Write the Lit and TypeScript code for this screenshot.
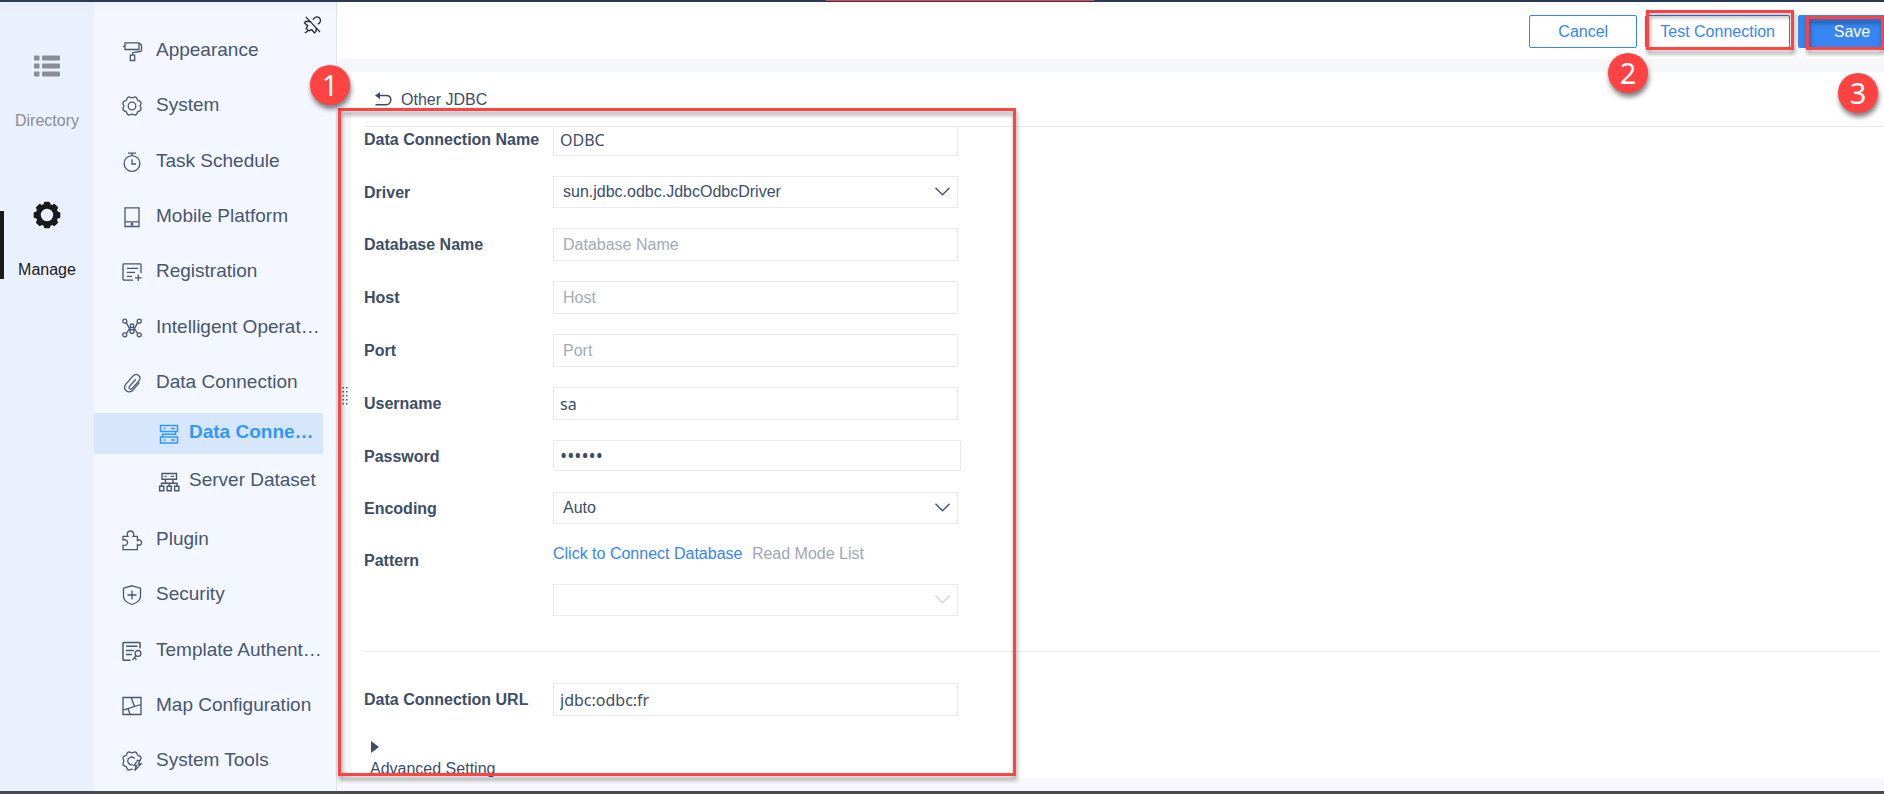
import { LitElement, html, svg, css, nothing } from "lit";
import type { SVGTemplateResult } from "lit";
import { customElement, property } from "lit/decorators.js";
import { classMap } from "lit/directives/class-map.js";

/** Outline of a soft-toothed wheel centred at 10,10. */
function wheel(teeth: number, radius: number, depth: number, from = 0, to = 360): string {
  const points: string[] = [];
  for (let a = from; a <= to; a += 5) {
    const t = (a * Math.PI) / 180;
    const r = radius + depth * Math.cos(teeth * t);
    points.push(`${(10 + r * Math.sin(t)).toFixed(2)} ${(10 - r * Math.cos(t)).toFixed(2)}`);
  }
  return "M" + points.join("L") + (to - from === 360 ? "Z" : "");
}

const icons: Record<string, SVGTemplateResult> = {
  appearance: svg`<path d="M1 5.400h2V1.800h14v6.700H3V5.400M17 3h.8c1.200 0 1.700.8 1.700 2v4c0 1-.4 1.400-1.400 1.500l-6.200.8c-1 .1-1.400.5-1.400 1.400v1.300M8.300 14.200h4.400v5.300H8.300z"/>`,
  system: svg`<path d=${wheel(8, 8.9, -0.7)}/><circle cx="10" cy="10" r="3.800"/>`,
  schedule: svg`<circle cx="10" cy="11.500" r="7.900"/><path d="M6 1.200h8M10 1.200v2.400M10 7.200v4.800h4"/>`,
  mobile: svg`<path d="M3 .8h14v18.700H3zM3 14.800h14"/><circle cx="10" cy="17.200" r=".8" fill="currentColor"/>`,
  registration: svg`<path d="M19 11V2.700c0-.6-.3-.9-.9-.9H1.900c-.6 0-.9.3-.9.9v14.600c0 .6.3.9.9.9H11M5 6.300h11M5 10.300h8M5 14.300h5M16.300 12.500v6.500M13 15.800h6.500"/>`,
  intelligent: svg`<circle cx="2.800" cy="3.200" r="2"/><circle cx="17.200" cy="3.200" r="2"/><circle cx="2.800" cy="16.800" r="2"/><circle cx="17.200" cy="16.800" r="2"/><circle cx="10" cy="7.800" r="1.800"/><circle cx="10" cy="13.500" r="2"/><path d="M4.300 4.600l4.300 8M15.700 4.600l-4.300 8M4.300 15.400l4.400-6.300M15.700 15.400l-4.400-6.300"/>`,
  clip: svg`<path d="M13.800 6.300l-6.100 6.800c-.9 1-.8 2 0 2.700.8.6 1.800.5 2.600-.4l6.400-7.300c1.700-2 1.500-4.300-.1-5.700-1.700-1.400-4-1.300-5.700.7l-7 8c-1.800 2.200-1.500 4.900.3 6.600 1.900 1.700 4.800 1.600 6.700-.6l6.500-7.500"/>`,
  connection: svg`<path d="M1.500 1.500h17v6h-17zM1.500 13h17v6h-17zM3.500 13v-2.700h13V7.500M4.500 4.500h2M12 4.500h4M4.500 16h2M12 16h4" stroke-width="1.500"/>`,
  dataset: svg`<path d="M3 1.500h14.500v5.800H3zM5.500 4.400h2M12 4.400h3M6.500 7.300v4M14 7.300v4M10.200 11.300v3M2.500 14.300v-3h15.500v3M.6 14.300h4.200v4.500H.6zM8.100 14.300h4.200v4.500H8.100zM15.600 14.300h4.200v4.500h-4.200z" stroke-width="1.400"/>`,
  plugin: svg`<path d="M1 6.300h4.900c-.8-1.100-.9-2-.6-2.900.5-1.600 1.600-2.400 3.200-2.400s2.700.8 3.200 2.400c.3.900.2 1.800-.6 2.900h4.300v4.300c1.100-.7 1.900-.7 2.700-.4 1 .5 1.500 1.300 1.500 2.400s-.5 2-1.500 2.500c-.8.300-1.600.2-2.700-.5v5H1v-4.300c2 .4 4.600-.3 4.600-2.800S3 9.300 1 10z"/>`,
  security: svg`<path d="M10 .8l8.500 2.400v8c0 3.800-3.400 6.500-8.500 8.300-5.100-1.800-8.500-4.500-8.500-8.300v-8zM10 5.500v9M5.500 10h9"/>`,
  template: svg`<path d="M18 7.500V2.300c0-.6-.3-.9-.9-.9H1.900c-.6 0-.9.3-.9.9v16c0 .6.3.9.9.9H8.500M4 5.300h11.500M4 9.400h8M4 13.500h6" stroke-width="1.500"/><circle cx="16" cy="12.400" r="2.900"/><path d="M14 14.500l-3.500 4.700M12.500 16.800l2 2"/>`,
  map: svg`<path d="M1 1.500h18v17H1zM1 14.200l18-5.700M9.200 1.500l3.300 9M6 12.700l2.200 5.800"/>`,
  tools: svg`<path d=${wheel(8, 8.9, -0.7, -185, 85)}/><path d="M12.600 7.500a3.800 3.800 0 1 0-1.600 6M15.500 9.500l-3.500 5h2.500l-1.800 5 6.300-6.500h-2.700l1.700-3.500z"/>`,
  pin: svg`<path d="M3 2l15 16M10.500 5c1.500-3.200 4.800-3.800 6.800-1.800s1.300 5-1.800 6.500M8.500 7l-5.600-.4-1.400 1.700 3.500 3-1.700 2.700 2.700 2.700M5.500 16.500l-3.500 2.500M14 13l-.3 4.300-1.700 1.500-3-3.500M9 15.300l-3 1.400" stroke-width="1.400"/>`,
};

interface MenuEntry {
  icon: string;
  text: string;
  active?: boolean;
  children?: MenuEntry[];
}

const menu: MenuEntry[] = [
  { icon: "appearance", text: "Appearance" },
  { icon: "system", text: "System" },
  { icon: "schedule", text: "Task Schedule" },
  { icon: "mobile", text: "Mobile Platform" },
  { icon: "registration", text: "Registration" },
  { icon: "intelligent", text: "Intelligent Operations" },
  {
    icon: "clip",
    text: "Data Connection",
    children: [
      { icon: "connection", text: "Data Connection", active: true },
      { icon: "dataset", text: "Server Dataset" },
    ],
  },
  { icon: "plugin", text: "Plugin" },
  { icon: "security", text: "Security" },
  { icon: "template", text: "Template Authentication" },
  { icon: "map", text: "Map Configuration" },
  { icon: "tools", text: "System Tools" },
];

@customElement("line-icon")
class LineIcon extends LitElement {
  @property() name = "";

  static styles = css`
    :host {
      display: block;
      flex: none;
      width: 20px;
      height: 20px;
    }
    svg {
      display: block;
      width: 100%;
      height: 100%;
      fill: none;
      stroke: currentColor;
      stroke-width: 1.3;
      overflow: visible;
    }
  `;

  render() {
    return html`<svg viewBox="0 0 20 20" aria-hidden="true">${icons[this.name]}</svg>`;
  }
}

@customElement("nav-rail")
class NavRail extends LitElement {
  static styles = css`
    :host {
      display: flex;
      flex-direction: column;
      flex: none;
      gap: 71px;
      width: 94px;
      padding-top: 52px;
      box-sizing: border-box;
      background: #eaf1fd;
    }
    .item {
      position: relative;
      display: flex;
      flex-direction: column;
      align-items: center;
      gap: 32px;
      line-height: 22px;
      color: #8a8d93;
      text-decoration: none;
    }
    .item.active {
      color: #1a1a1a;
    }
    .item.active::before {
      content: "";
      position: absolute;
      left: 0;
      bottom: 2px;
      width: 4px;
      height: 68px;
      background: #1a1a1a;
    }
    svg {
      display: block;
      width: 26px;
      height: 24px;
      overflow: visible;
    }
  `;

  render() {
    const spokes = [0, 45, 90, 135, 180, 225, 270, 315];
    return html`
      <a class="item" href="#directory">
        <svg viewBox="0 0 26 24" fill="currentColor" aria-hidden="true">
          ${[1.5, 9.5, 17.5].map(
            (y) => svg`<rect x="0" y=${y} width="5.500" height="5" rx="1"/><rect x="8" y=${y} width="18" height="5" rx="1"/>`
          )}
        </svg>
        <span>Directory</span>
      </a>
      <a class="item active" href="#manage" aria-current="page">
        <svg viewBox="0 0 26 24" aria-hidden="true">
          <circle cx="13" cy="12" r="8.700" fill="none" stroke="currentColor" stroke-width="5"/>
          ${spokes.map(
            (a) => svg`<rect x="9.800" y="-1.300" width="6.400" height="5" rx="1.500" fill="currentColor" transform="rotate(${a} 13 12)"/>`
          )}
        </svg>
        <span>Manage</span>
      </a>
    `;
  }
}

@customElement("side-menu")
class SideMenu extends LitElement {
  static styles = css`
    :host {
      position: relative;
      flex: none;
      width: 243px;
      box-sizing: border-box;
      border-right: 1px solid #dfe4ee;
      background: #f4f7ff;
    }
    .pin {
      position: absolute;
      top: 13px;
      right: 14px;
      padding: 0;
      border: 0;
      background: none;
      color: #26282c;
    }
    .pin line-icon {
      width: 19px;
      height: 19px;
    }
    ul {
      margin: 0;
      padding: 0;
      list-style: none;
    }
    .menu {
      display: flex;
      flex-direction: column;
      height: 100%;
      padding: 20px 0 3px;
      box-sizing: border-box;
    }
    .entry {
      display: flex;
      flex: 1 0 32px;
    }
    .branch {
      padding: 3px 13px 9px 0;
    }
    .link {
      display: flex;
      align-items: center;
      flex: 1;
      min-width: 0;
      gap: 14px;
      padding: 0 13px 0 28px;
      font-size: 19px;
      color: #48566f;
      text-decoration: none;
    }
    .link line-icon {
      margin-top: 2px;
    }
    .text {
      min-width: 0;
      overflow: hidden;
      text-overflow: ellipsis;
      white-space: nowrap;
      line-height: 24px;
    }
    .child {
      height: 41px;
      gap: 10px;
      padding: 0 6px 0 65px;
    }
    .branch li + li {
      margin-top: 7px;
    }
    .child .text {
      padding-bottom: 2px;
    }
    .child.active {
      background: #d6e7fd;
      color: #3296fa;
      font-weight: bold;
    }
  `;

  private link(entry: MenuEntry, child = false) {
    return html`<a
      class=${classMap({ link: true, child, active: !!entry.active })}
      href="#${entry.icon}"
      aria-current=${entry.active ? "page" : nothing}
      ><line-icon name=${entry.icon}></line-icon><span class="text">${entry.text}</span></a
    >`;
  }

  render() {
    return html`
      <ul class="menu">
        ${menu.map(
          (entry) => html`
            <li class="entry">${this.link(entry)}</li>
            ${entry.children
              ? html`<li class="branch">
                  <ul>
                    ${entry.children.map((child) => html`<li>${this.link(child, true)}</li>`)}
                  </ul>
                </li>`
              : nothing}
          `
        )}
      </ul>
      <button class="pin" type="button" aria-label="Unpin menu"><line-icon name="pin"></line-icon></button>
    `;
  }
}

@customElement("connection-form")
class ConnectionForm extends LitElement {
  static styles = css`
    :host {
      display: block;
      min-height: 0;
      overflow: hidden;
      color: #3d4d66;
    }
    form {
      display: flex;
      flex-direction: column;
      gap: 20px;
      /* the list rests slightly scrolled under the panel title */
      margin-top: -4px;
    }
    .row {
      display: grid;
      grid-template-columns: 189px minmax(0, 405px);
      align-items: start;
    }
    .label {
      height: 32px;
      font-weight: bold;
      line-height: 34px;
      white-space: nowrap;
    }
    input,
    select {
      display: block;
      width: 100%;
      height: 32px;
      margin: 0;
      padding: 0 9px;
      box-sizing: border-box;
      border: 1px solid #e8eaed;
      border-radius: 0;
      outline: none;
      background: #fff;
      color: #3d4d66;
      font: 16px "Liberation Sans", Arial, sans-serif;
    }
    input {
      height: 33px;
    }
    input::placeholder {
      color: #a3aab6;
      opacity: 1;
    }
    .filled {
      padding: 0 6px;
      font-family: "Noto Sans", sans-serif;
    }
    .secret {
      width: calc(100% + 3px);
      height: 31px;
      border-radius: 2px;
      font-size: 19px;
    }
    .pick {
      position: relative;
    }
    select {
      padding-bottom: 2px;
      appearance: none;
      opacity: 1;
    }
    .pick svg {
      position: absolute;
      right: 8px;
      top: 11px;
      width: 15px;
      height: 9px;
      fill: none;
      stroke: #48566f;
      stroke-width: 1.5;
      pointer-events: none;
    }
    .pick.off svg {
      stroke: #d3d6dd;
    }
    .stack {
      display: flex;
      flex-direction: column;
      gap: 20px;
    }
    .hint {
      margin: 0;
      line-height: 20px;
      color: #a0a7b3;
    }
    .hint a {
      margin-right: 5px;
      color: #3685f2;
      text-decoration: none;
    }
    hr {
      width: calc(100% - 4px);
      margin: 15px 0 11px;
      border: 0;
      border-top: 1px solid #e8eaed;
      box-sizing: border-box;
    }
    .advanced {
      display: flex;
      flex-direction: column;
      align-items: flex-start;
      gap: 6px;
      margin: 5px 0 0 6px;
      padding: 0;
      border: 0;
      background: none;
      color: inherit;
      font: inherit;
      line-height: 20px;
    }
    .advanced svg {
      width: 8px;
      height: 12px;
      margin-left: 1px;
      fill: #3d4d66;
    }
  `;

  private text(id: string, label: string, value = "") {
    return html`<div class="row">
      <label class="label" for=${id}>${label}</label>
      <input id=${id} class=${value ? "filled" : ""} .value=${value} placeholder=${label} />
    </div>`;
  }

  private pick(id: string, label: string, value: string, off = false) {
    return html`<div class=${classMap({ pick: true, off })}>
      <select id=${id} aria-label=${label} ?disabled=${off}>
        <option>${value}</option>
      </select>
      <svg viewBox="0 0 15 9" aria-hidden="true"><path d="M.5 .8l7 7 7-7" /></svg>
    </div>`;
  }

  render() {
    return html`<form>
      ${this.text("name", "Data Connection Name", "ODBC")}
      <div class="row">
        <label class="label" for="driver">Driver</label>
        ${this.pick("driver", "Driver", "sun.jdbc.odbc.JdbcOdbcDriver")}
      </div>
      ${this.text("database", "Database Name")} ${this.text("host", "Host")} ${this.text("port", "Port")}
      ${this.text("username", "Username", "sa")}
      <div class="row">
        <label class="label" for="password">Password</label>
        <input id="password" class="filled secret" type="password" .value=${"secret"} />
      </div>
      <div class="row">
        <label class="label" for="encoding">Encoding</label>
        ${this.pick("encoding", "Encoding", "Auto")}
      </div>
      <div class="row">
        <label class="label" for="pattern">Pattern</label>
        <div class="stack">
          <p class="hint"><a href="#connect">Click to Connect Database</a> Read Mode List</p>
          ${this.pick("pattern", "Pattern", "", true)}
        </div>
      </div>
      <hr />
      ${this.text("url", "Data Connection URL", "jdbc:odbc:fr")}
      <button class="advanced" type="button" aria-expanded="false">
        <svg viewBox="0 0 8 12" aria-hidden="true"><path d="M0 0l8 6-8 6z" /></svg>
        Advanced Setting
      </button>
    </form>`;
  }
}

@customElement("app-root")
class AppRoot extends LitElement {
  static styles = css`
    :host {
      display: flex;
      flex-direction: column;
      height: 100vh;
      overflow: hidden;
      background: #f6f7fa;
      color: #3d4d66;
      font: 16px "Liberation Sans", Arial, sans-serif;
    }
    .top {
      position: relative;
      z-index: 1;
      display: flex;
      flex: none;
      justify-content: center;
      height: 2px;
      background: #2d3a55;
      box-shadow: 0 2px 14px rgba(40, 50, 80, 0.1);
    }
    .progress {
      width: 268px;
      height: 1px;
      margin-left: 36px;
      background: #e0474c;
    }
    .bottom {
      flex: none;
      height: 3px;
      background: #464b50;
    }
    .body {
      display: flex;
      flex: 1;
      min-height: 0;
    }
    .main {
      position: relative;
      display: flex;
      flex-direction: column;
      flex: 1;
      min-width: 0;
    }
    .bar {
      display: flex;
      flex: none;
      align-items: flex-start;
      justify-content: flex-end;
      overflow: hidden;
      height: 57px;
      box-sizing: border-box;
      padding-top: 13px;
      background: #fff;
    }
    .actions {
      display: flex;
      gap: 8px;
      margin-right: -22px;
    }
    .action {
      min-width: 108px;
      height: 33px;
      padding: 0 14px;
      border: 1px solid #3685f2;
      border-radius: 2px;
      background: #fff;
      color: #3685f2;
      font: inherit;
      line-height: 20px;
    }
    .action.primary {
      background: #3685f2;
      color: #fff;
    }
    .panel {
      display: flex;
      flex-direction: column;
      flex: 1;
      min-height: 0;
      margin: 13px 0 13px 14px;
      padding-left: 13px;
      background: #fff;
    }
    .title {
      display: flex;
      flex: none;
      align-items: center;
      gap: 9px;
      height: 54px;
      padding-left: 10px;
      border-bottom: 1px solid #e8eaed;
      line-height: 20px;
    }
    .title span {
      padding-top: 1px;
    }
    .back {
      display: block;
      padding: 0;
      border: 0;
      background: none;
      color: inherit;
    }
    .back svg {
      display: block;
      width: 18px;
      height: 16px;
      fill: none;
      stroke: currentColor;
      stroke-width: 1.5;
    }
    .grip {
      position: absolute;
      left: 1px;
      top: 50%;
      width: 10px;
      height: 18px;
      margin-top: -10px;
      fill: #48566f;
    }
    .frame {
      position: absolute;
      box-sizing: border-box;
      border: 3px solid #ff4242;
      filter: drop-shadow(1px 4px 2px rgba(0, 0, 0, 0.4));
      pointer-events: none;
    }
    .frame.form {
      left: 1px;
      top: 106px;
      bottom: 15px;
      width: 678px;
    }
    .frame.test {
      right: 90px;
      top: 8px;
      width: 148px;
      height: 40px;
    }
    .frame.save {
      right: 0;
      top: 14px;
      width: 78px;
      height: 34px;
    }
    .mark {
      position: absolute;
      z-index: 1;
      width: 40px;
      height: 40px;
      border-radius: 50%;
      background: #ff4242;
      box-shadow: 1px 4px 5px rgba(0, 0, 0, 0.5);
      color: #fff;
      font-family: "Noto Sans", sans-serif;
      font-size: 29px;
      line-height: 40px;
      text-align: center;
    }
    .mark.one {
      left: -27px;
      top: 63px;
    }
    .mark.two {
      right: 236px;
      top: 51px;
    }
    .mark.three {
      right: 6px;
      top: 71px;
    }
  `;

  render() {
    return html`
      <div class="top"><div class="progress"></div></div>
      <div class="body">
        <nav-rail></nav-rail>
        <side-menu></side-menu>
        <main class="main">
          <header class="bar">
            <div class="actions">
              <button class="action" type="button">Cancel</button>
              <button class="action" type="button">Test Connection</button>
              <button class="action primary" type="button">Save</button>
            </div>
          </header>
          <section class="panel">
            <div class="title">
              <button class="back" type="button" aria-label="Back">
                <svg viewBox="0 0 18 16" aria-hidden="true">
                  <path d="M4 4.500h8c3 0 4.800 1.800 4.800 4.300S15 13.800 12 13.800H1.500" />
                  <path d="M1 4.500l5-3.500v7z" fill="currentColor" stroke="none" />
                </svg>
              </button>
              <span>Other JDBC</span>
            </div>
            <connection-form></connection-form>
          </section>
          <svg class="grip" viewBox="0 0 10 18" aria-hidden="true">
            ${[1, 5, 9, 13, 17].map((y) =>
              [1, 4.5, 8].map((x) => svg`<rect x=${x} y=${y - 1} width="1.500" height="1.500"/>`)
            )}
          </svg>
          <div class="frame form"></div>
          <div class="frame test"></div>
          <div class="frame save"></div>
          <div class="mark one">1</div>
          <div class="mark two">2</div>
          <div class="mark three">3</div>
        </main>
      </div>
      <div class="bottom"></div>
    `;
  }
}
